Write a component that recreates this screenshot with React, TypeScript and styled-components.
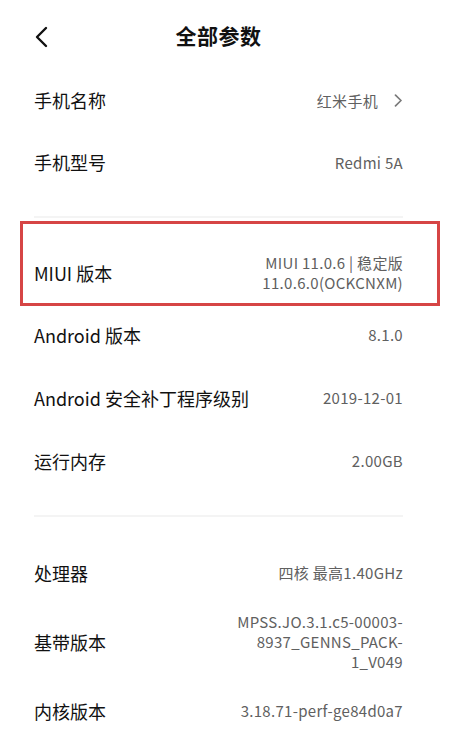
import styled, { createGlobalStyle } from 'styled-components';

const GlobalStyle = createGlobalStyle`
  html, body {
    margin: 0;
    padding: 0;
    background: #fff;
  }
  body {
    font-family: "Noto Sans CJK SC", "Noto Sans", sans-serif;
    -webkit-font-smoothing: antialiased;
  }
`;

const Page = styled.div`
  width: 456px;
  min-height: 731px;
  padding: 0 53px 0 34px;
  box-sizing: border-box;
  overflow: hidden;
  background: #fff;
`;

const Header = styled.div`
  position: relative;
  height: 69px;
  display: flex;
  align-items: center;
  justify-content: center;
  padding-bottom: 0;
  box-sizing: border-box;
`;

const BackButton = styled.button`
  position: absolute;
  left: 0;
  top: 25px;
  width: 20px;
  height: 24px;
  padding: 0;
  border: none;
  background: none;
  display: flex;
  align-items: center;
`;

const Title = styled.h1`
  margin: 0;
  font-size: 21px;
  font-weight: 700;
  color: #111;
  letter-spacing: 0.5px;
`;

const Row = styled.div<{ $h?: number }>`
  display: flex;
  align-items: center;
  justify-content: space-between;
  height: ${p => p.$h ?? 63}px;
`;

const Label = styled.span`
  font-size: 18px;
  color: #111;
  white-space: nowrap;
`;

const Value = styled.div`
  display: flex;
  align-items: center;
  gap: 16px;
  font-size: 15px;
  line-height: 20px;
  letter-spacing: 0.3px;
  color: #606060;
  text-align: right;
`;

const Lines = styled.div`
  display: flex;
  flex-direction: column;
  align-items: flex-end;
  padding-top: 1px;
`;

const Divider = styled.div`
  height: 2px;
  background: #f4f4f4;
  margin: 23px 0 24px;
`;

const Highlight = styled.div`
  margin: -21px -37px -3px -14px;
  padding: 18px 34px 0 11px;
  border: 3px solid #d64545;
`;

const Chevron = () => (
  <svg width="9" height="13" viewBox="0 0 9 13" fill="none">
    <polyline points="1.5,1.2 7,6.5 1.5,11.8" stroke="#7a7a7a" strokeWidth="1.7" strokeLinecap="round" strokeLinejoin="round" />
  </svg>
);

const BackIcon = () => (
  <svg width="14" height="22" viewBox="0 0 14 22" fill="none">
    <polyline points="12,2 3,11 12,20" stroke="#111" strokeWidth="2.4" strokeLinecap="round" strokeLinejoin="round" />
  </svg>
);

type Item = { label: string; value: string[]; link?: boolean; h?: number };

const groups: Item[][] = [
  [
    { label: '手机名称', value: ['红米手机'], link: true, h: 62 },
    { label: '手机型号', value: ['Redmi 5A'], h: 62 },
  ],
  [
    { label: 'MIUI 版本', value: ['MIUI 11.0.6 | 稳定版', '11.0.6.0(OCKCNXM)'], h: 61 },
    { label: 'Android 版本', value: ['8.1.0'] },
    { label: 'Android 安全补丁程序级别', value: ['2019-12-01'] },
    { label: '运行内存', value: ['2.00GB'] },
  ],
  [
    { label: '处理器', value: ['四核 最高1.40GHz'] },
    { label: '基带版本', value: ['MPSS.JO.3.1.c5-00003-', '8937_GENNS_PACK-', '1_V049'], h: 75 },
    { label: '内核版本', value: ['3.18.71-perf-ge84d0a7'] },
  ],
];

function InfoRow({ item }: { item: Item }) {
  return (
    <Row $h={item.h}>
      <Label>{item.label}</Label>
      <Value>
        <Lines>
          {item.value.map(line => (
            <span key={line}>{line}</span>
          ))}
        </Lines>
        {item.link ? <Chevron /> : null}
      </Value>
    </Row>
  );
}

export default function App() {
  return (
    <>
      <GlobalStyle />
      <Page>
        <Header>
          <BackButton aria-label="返回">
            <BackIcon />
          </BackButton>
          <Title>全部参数</Title>
        </Header>
        {groups.map((group, gi) => (
          <div key={gi}>
            {gi > 0 ? <Divider /> : null}
            {group.map(item =>
              item.label === 'MIUI 版本' ? (
                <Highlight key={item.label}>
                  <InfoRow item={item} />
                </Highlight>
              ) : (
                <InfoRow key={item.label} item={item} />
              )
            )}
          </div>
        ))}
      </Page>
    </>
  );
}
